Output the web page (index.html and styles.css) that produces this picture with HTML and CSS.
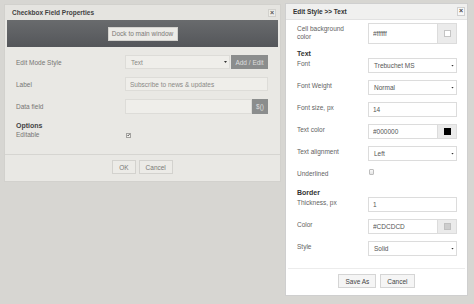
FILE: index.html
```html
<!doctype html>
<html lang="en">
<head>
	<meta charset="utf-8">
	<title>Checkbox Field Properties</title>
	<link rel="stylesheet" href="styles.css">
</head>
<body>
<div class="page">

	<!-- docked properties dialog, behind the overlay -->
	<div class="dlg dlg-left">
		<div class="dlg-title">Checkbox Field Properties<span class="dlg-close">×</span></div>
		<div class="dock-bar"><button class="btn btn-dock">Dock to main window</button></div>
		<div class="form-left">
			<div class="row">
				<label>Edit Mode Style</label>
				<div class="field">
					<div class="select">Text</div>
					<button class="addon addon-wide">Add / Edit</button>
				</div>
			</div>
			<div class="row">
				<label>Label</label>
				<div class="field"><input class="inp" type="text" value="Subscribe to news &amp; updates"></div>
			</div>
			<div class="row">
				<label>Data field</label>
				<div class="field"><input class="inp" type="text" value=""><button class="addon addon-small">$()</button></div>
			</div>
			<div class="heading">Options</div>
			<div class="row row-check">
				<label>Editable</label>
				<span class="check checked"><svg width="4" height="4" viewBox="0 0 4 4"><path d="M0.5 2 L1.6 3.2 L3.6 0.6" fill="none" stroke="#333" stroke-width="0.9"/></svg></span>
			</div>
		</div>
		<div class="footer">
			<button class="btn">OK</button>
			<button class="btn">Cancel</button>
		</div>
	</div>

	<!-- style editor -->
	<div class="dlg dlg-right">
		<div class="dlg-title">Edit Style &gt;&gt; Text<span class="dlg-close">×</span></div>
		<div class="form-right">
			<div class="row row-tall">
				<label>Cell background color</label>
				<div class="field"><input class="inp" type="text" value="#ffffff"><span class="swatch"><i class="chip chip-white"></i></span></div>
			</div>

			<div class="heading">Text</div>
			<div class="row">
				<label>Font</label>
				<div class="field"><div class="select">Trebuchet MS</div></div>
			</div>
			<div class="row">
				<label>Font Weight</label>
				<div class="field"><div class="select">Normal</div></div>
			</div>
			<div class="row">
				<label>Font size, px</label>
				<div class="field"><input class="inp" type="text" value="14"></div>
			</div>
			<div class="row">
				<label>Text color</label>
				<div class="field"><input class="inp" type="text" value="#000000"><span class="swatch"><i class="chip chip-black"></i></span></div>
			</div>
			<div class="row">
				<label>Text alignment</label>
				<div class="field"><div class="select">Left</div></div>
			</div>
			<div class="row row-under">
				<label>Underlined</label>
				<span class="check"></span>
			</div>

			<div class="heading">Border</div>
			<div class="row">
				<label>Thickness, px</label>
				<div class="field"><input class="inp" type="text" value="1"></div>
			</div>
			<div class="row">
				<label>Color</label>
				<div class="field"><input class="inp" type="text" value="#CDCDCD"><span class="swatch"><i class="chip chip-gray"></i></span></div>
			</div>
			<div class="row">
				<label>Style</label>
				<div class="field"><div class="select">Solid</div></div>
			</div>
		</div>
		<div class="footer">
			<button class="btn">Save As</button>
			<button class="btn">Cancel</button>
		</div>
	</div>

</div>
</body>
</html>
```

FILE: styles.css
```css
*{ margin: 0; padding: 0; box-sizing: border-box }
body{ background: #d7d6d2; font-family: "Liberation Sans", Arial, sans-serif; font-size: 6.5px; width: 474px; height: 304px; overflow: hidden }
.page{ display: flex; align-items: flex-start; padding: 3px 0 0 4px }

.dlg{ display: flex; flex-direction: column; border: 1px solid #d2d1cd }
.dlg-title{ display: flex; align-items: center; justify-content: space-between; font-weight: bold }
.dlg-close{ width: 8px; height: 8px; border: 1px solid #d2d1cd; font-size: 7px; line-height: 6px; text-align: center; font-weight: bold }

.btn{ font-family: inherit; font-size: 6.5px; height: 14px; padding: 0 6px; border: 1px solid #d5d5d5; background: #f4f4f4; color: #555 }

.row{ display: flex; align-items: center; height: 14px; margin-bottom: 8px }
.row label{ flex: none }
.field{ flex: 1; min-width: 0; display: flex; height: 100% }
.inp{ flex: 1; width: 0; min-width: 0; height: 100%; font-family: inherit; font-size: 6.5px; padding: 0 4px; outline: none }
.select{ flex: 1; display: flex; align-items: center; justify-content: space-between; height: 100%; padding: 0 2px 0 5px }
.select::after{ content: ""; width: 3px; height: 2px; background: #333; clip-path: polygon(0 0, 100% 0, 50% 100%) }
.heading{ font-size: 7px; font-weight: bold; line-height: 9px }
.check{ display: flex; align-items: center; justify-content: center }

/* left dialog */
.dlg-left{ width: 277px; height: 178px; margin-top: 1px; background: #e9e8e4 }
.dlg-left .dlg-title{ height: 15px; padding: 0 4px 0 7px; color: #424242; background: #e5e4e0 }
.dlg-left .dlg-close{ background: #edece8; color: #555 }
.dock-bar{ height: 27px; margin: 0 2px; background: linear-gradient(#696b6d, #54565a); display: flex; align-items: center; justify-content: center }
.btn-dock{ width: 70px; padding: 0; background: #efefed; border-color: #8b8c8d; color: #555 }
.form-left{ flex: 1; padding: 8px 12px 0 11px }
.form-left label{ width: 109px; color: #767573 }
.form-left .inp, .form-left .select{ background: #efeeea; border: 1px solid #dddcd8; color: #8a8986 }
.form-left .row:nth-child(3) .field{ height: 15px }
.addon{ font-family: inherit; font-size: 6.5px; border: 0; background: #8b8d8d; color: #dedede }
.addon-wide{ width: 37px; margin-left: 1px }
.addon-small{ width: 16px }
.form-left .heading{ margin-top: 7px; color: #444 }
.row-check{ height: 9px; margin: 0 }
.check.checked{ width: 5px; height: 5px; margin: 1px 0 0 1px; border: 1px solid #a3a29f; background: #f2f1ed }
.dlg-left .footer{ border-top: 1px solid #d6d5d1; display: flex; justify-content: center; gap: 3px; padding: 5px 0 7px }
.dlg-left .btn{ background: #ecebe7; border-color: #d3d2ce; color: #7a7976 }

/* right dialog */
.dlg-right{ width: 183px; height: 293px; margin-left: 4px; background: #fff; border-color: #cfcfcf }
.dlg-right .dlg-title{ height: 16px; padding: 0 2px 0 7px; color: #333; background: #f0f0ef; border-bottom: 1px solid #e2e2e2 }
.dlg-right .dlg-close{ height: 9px; background: #f8f8f8; border-color: #d0d0d0; color: #444 }
.form-right{ flex: 1; padding: 3px 10px 0 11px }
.form-right .row{ height: 15px; margin-bottom: 7px; align-items: flex-start }
.form-right label{ width: 71px; padding-top: 2px; line-height: 8px; color: #5f5f5f }
.form-right .inp, .form-right .select{ background: #fff; border: 1px solid #dcdcdc; color: #555 }
.form-right .row-tall{ height: 21px; margin-bottom: 0 }
.form-right .row-tall label{ width: 60px; margin-right: 11px }
.form-right .heading{ margin-top: 5px; color: #333 }
.form-right .row-under{ margin-bottom: 4px }
.form-right .row-under .check{ width: 5px; height: 6px; margin: 1px 0 0 1px; border: 1px solid #bdbdbd; border-radius: 1px; background: linear-gradient(#fafafa, #e4e4e4) }
.swatch{ width: 19px; height: 100%; background: #ebebeb; border: 1px solid #dcdcdc; border-left: 0; display: flex; align-items: center; justify-content: center }
.chip{ display: block; width: 7px; height: 7px }
.chip-white{ background: #fff; border: 1px solid #c4c4c4 }
.chip-black{ background: #000 }
.chip-gray{ background: #cdcdcd; border: 1px solid #c0c0c0 }
.dlg-right .footer{ border-top: 1px solid #ececec; margin: 0 2px; display: flex; justify-content: center; gap: 4px; padding: 5px 0 7px }
.dlg-right .btn{ background: #f5f5f5; border-color: #d5d5d5; color: #444 }
```
